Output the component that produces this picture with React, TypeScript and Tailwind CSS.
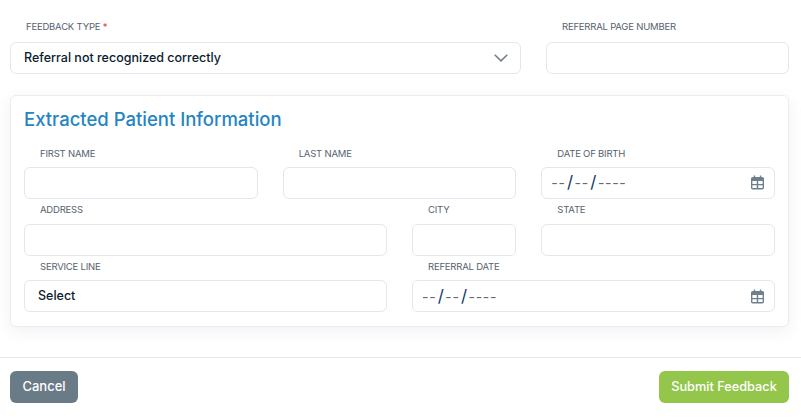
const font = { fontFamily: '"Inter", "Noto Sans", sans-serif' }

function CalendarIcon() {
  return (
    <svg width="13" height="15" viewBox="0 0 14 15" className="shrink-0">
      <path
        fill="#6f7f8c"
        fillRule="evenodd"
        d="M3 0h1.5v1.5h5V0H11v1.5h1.2c.9 0 1.8.8 1.8 1.8v9.9c0 1-.9 1.8-1.8 1.8H1.8C.9 15 0 14.200 0 13.200V3.300C0 2.300.9 1.500 1.800 1.500H3V0ZM1.500 6v3h4.700V6H1.500Zm6.300 0v3h4.700V6H7.800Zm-6.300 4.500v3h4.700v-3H1.500Zm6.300 0v3h4.700v-3H7.800Z"
      />
    </svg>
  )
}

function Label({ text, required }: { text: string; required?: boolean }) {
  return (
    <div className="pl-4 text-[9.500px] leading-[14px] tracking-[-0.2px] text-[#56626e] uppercase whitespace-nowrap">
      {text}
      {required && <span className="text-[#f0333f]"> *</span>}
    </div>
  )
}

function Box({ children }: { children?: React.ReactNode }) {
  return (
    <div className="flex h-8 items-center rounded-md border border-[#e5e5f0] bg-white text-[12.500px] font-medium text-[#0c1c2e]">
      {children}
    </div>
  )
}

function Slash() {
  return <span className="inline-block w-[9px] text-center text-[17px] font-normal tracking-normal text-[#0c3a6b]">/</span>
}

function DateBox() {
  return (
    <Box>
      <div className="flex w-full items-center justify-between pr-[10px] pl-[9px]">
        <span className="text-[14px] leading-none font-normal tracking-[0.7px] text-[#5f6b78]">
          --<Slash />--<Slash />----
        </span>
        <CalendarIcon />
      </div>
    </Box>
  )
}

function Field({ label, className, children }: { label: string; className: string; children?: React.ReactNode }) {
  return (
    <div className={className}>
      <div className="h-[24.670px] pt-[4.500px]">
        <Label text={label} />
      </div>
      {children ?? <Box />}
    </div>
  )
}

export default function App() {
  return (
    <div style={font} className="h-[419px] w-[801px] overflow-hidden bg-white">
      <div className="pt-5 pr-3 pl-[10px]">
        <div className="grid grid-cols-12 gap-x-[25px]">
          <div className="col-span-8">
            <div className="h-[22px]">
              <Label text="Feedback Type" required />
            </div>
            <Box>
              <div className="flex w-full items-center justify-between pr-3 pl-[13px]">
                <span>Referral not recognized correctly</span>
                <svg width="14" height="8" viewBox="0 0 14 8" fill="none" stroke="#6f7f8c" strokeWidth="1.500">
                  <path d="M.7.7 7 6.900 13.300.7" />
                </svg>
              </div>
            </Box>
          </div>
          <div className="col-span-4">
            <div className="h-[22px]">
              <Label text="Referral Page Number" />
            </div>
            <Box />
          </div>
        </div>

        <div className="mt-[21px] h-[232px] rounded-md border border-[#ebebf3] bg-white px-[13px] pt-[11px] shadow-[0_4px_16px_rgba(60,60,100,0.07)]">
          <h2 className="h-[24px] text-[18.500px] leading-[24px] font-medium text-[#2585c2]">Extracted Patient Information</h2>
          <div className="mt-[11.300px] grid grid-cols-12 gap-x-[25px]">
            <Field label="First Name" className="col-span-4" />
            <Field label="Last Name" className="col-span-4" />
            <Field label="Date of Birth" className="col-span-4">
              <DateBox />
            </Field>
            <Field label="Address" className="col-span-6" />
            <Field label="City" className="col-span-2" />
            <Field label="State" className="col-span-4" />
            <Field label="Service Line" className="col-span-6">
              <Box>
                <span className="pl-[13px]">Select</span>
              </Box>
            </Field>
            <Field label="Referral Date" className="col-span-6">
              <DateBox />
            </Field>
          </div>
        </div>
      </div>

      <div className="mt-[30px] flex justify-between border-t border-[#e6e6ee] pt-[13px] pr-3 pl-[10px]">
        <button className="h-8 w-[68px] rounded-md bg-[#6a7b88] text-[13px] font-medium text-white">Cancel</button>
        <button className="h-8 w-[130px] rounded-md bg-[#93c64a] text-[12.750px] font-medium text-white">Submit Feedback</button>
      </div>
    </div>
  )
}
